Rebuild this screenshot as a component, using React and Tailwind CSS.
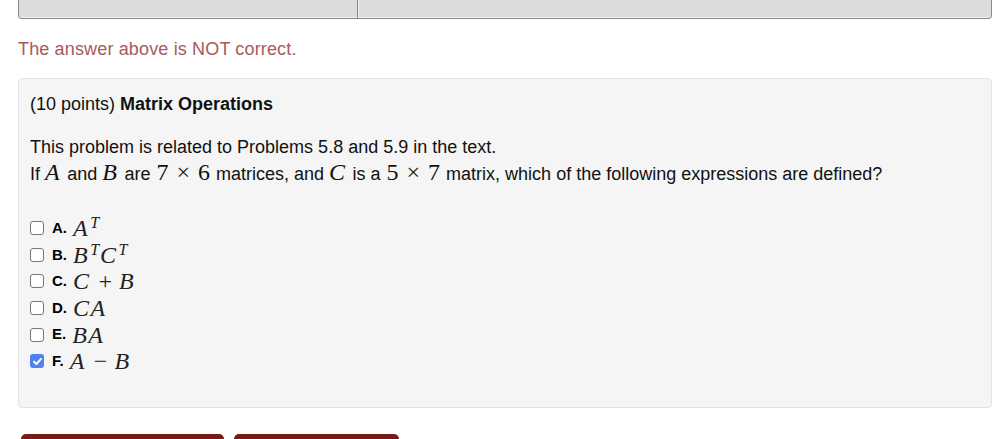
import React from "react";

const serif = { fontFamily: '"Liberation Serif", serif' };

const M = ({ children }) => (
  <span className="italic text-[24px] leading-none tracking-[1.5px] mr-[1px]" style={serif}>
    {children}
  </span>
);
const R = ({ children }) => (
  <span className="text-[24px] leading-none not-italic mx-[1px]" style={serif}>
    {children}
  </span>
);
const Op = ({ children }) => (
  <span className="text-[24px] leading-none not-italic mx-[7px]" style={serif}>
    {children}
  </span>
);
const Sup = ({ children }) => (
  <sup className="italic text-[16px] leading-none relative -top-[8px] mr-[1px]" style={serif}>
    {children}
  </sup>
);

function Box({ checked }) {
  if (checked) {
    return (
      <span className="inline-flex w-[14px] h-[14px] rounded-[3px] bg-[#4f82f0] items-center justify-center shrink-0">
        <svg width="11" height="11" viewBox="0 0 12 12">
          <path d="M2.2 6.3 L4.8 8.8 L9.8 3.2" fill="none" stroke="white" strokeWidth="2.2" strokeLinecap="round" strokeLinejoin="round" />
        </svg>
      </span>
    );
  }
  return <span className="inline-block w-[14px] h-[14px] rounded-[3px] border border-[#767676] bg-white shrink-0" />;
}

function Opt({ letter, checked, children }) {
  return (
    <div className="flex items-center h-[26.6px]">
      <Box checked={checked} />
      <span className="ml-[8px] font-bold text-[15px] text-black">{letter}.</span>
      <span className="ml-[6px] flex items-baseline">{children}</span>
    </div>
  );
}

export default function App() {
  return (
    <div className="bg-white w-[999px] h-[439px] overflow-hidden text-[#222]" style={{ fontFamily: '"Liberation Sans", Arial, sans-serif' }}>
      <div className="ml-[18px] mr-[7px] h-[19px] flex bg-[#dcdcdc] border-x border-b border-[#8a8a8a] rounded-b-[4px] shadow-[inset_0_-1px_0_#f0f0f0]">
        <div className="w-[339px] border-r border-[#8a8a8a] shadow-[1px_0_0_#f2f2f2]" />
        <div className="flex-1" />
      </div>

      <div className="ml-[18px] mt-[20px] text-[18px] leading-[20px] tracking-[0.15px] text-[#a55b5b]">The answer above is NOT correct.</div>

      <div className="ml-[18px] mr-[7px] mt-[19px] h-[330px] bg-[#f5f5f5] border border-[#e3e3e3] rounded-[4px] px-[11px] pt-[14px]">
        <div className="text-[18px] leading-[22px] text-[#111]">
          (10 points) <span className="font-bold">Matrix Operations</span>
        </div>
        <div className="mt-[19px] text-[18px] leading-[26px] text-[#111]">
          <div>This problem is related to Problems 5.8 and 5.9 in the text.</div>
          <div className="flex items-baseline whitespace-pre">
            <span>If </span>
            <M>A</M>
            <span> and </span>
            <M>B</M>
            <span> are </span>
            <R>7</R>
            <Op>×</Op>
            <R>6</R>
            <span> matrices, and </span>
            <M>C</M>
            <span> is a </span>
            <R>5</R>
            <Op>×</Op>
            <R>7</R>
            <span> matrix, which of the following expressions are defined?</span>
          </div>
        </div>
        <div className="mt-[28px]">
          <Opt letter="A">
            <M>A</M>
            <Sup>T</Sup>
          </Opt>
          <Opt letter="B">
            <M>B</M>
            <Sup>T</Sup>
            <M>C</M>
            <Sup>T</Sup>
          </Opt>
          <Opt letter="C">
            <M>C</M>
            <Op>+</Op>
            <M>B</M>
          </Opt>
          <Opt letter="D">
            <M>CA</M>
          </Opt>
          <Opt letter="E">
            <M>BA</M>
          </Opt>
          <Opt letter="F" checked>
            <M>A</M>
            <Op>−</Op>
            <M>B</M>
          </Opt>
        </div>
      </div>

      <div className="ml-[21px] mt-[26px] flex gap-[10px]">
        <div className="w-[203px] h-[20px] bg-[#7b1a14] rounded-t-[5px]" />
        <div className="w-[165px] h-[20px] bg-[#7b1a14] rounded-t-[5px]" />
      </div>
    </div>
  );
}
